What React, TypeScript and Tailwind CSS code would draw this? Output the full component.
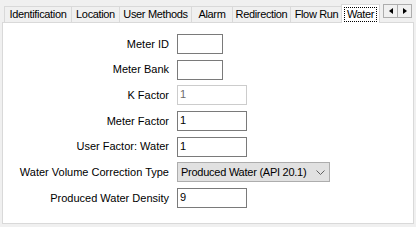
import React from "react";

const tabs = [
  { label: "Identification", w: "w-[68px]" },
  { label: "Location", w: "w-[49px]" },
  { label: "User Methods", w: "w-[73px]" },
  { label: "Alarm", w: "w-[42px]" },
  { label: "Redirection", w: "w-[59px]" },
  { label: "Flow Run", w: "w-[53px]" },
];

function TextBox({
  value,
  wide,
  disabled,
}: {
  value?: string;
  wide?: boolean;
  disabled?: boolean;
}) {
  return (
    <div
      className={`h-[20px] ${wide ? "w-[70px]" : "w-[46px]"} border ${
        disabled
          ? "border-[#cccccc] text-[#6d6d6d]"
          : "border-[#7a7a7a] text-black"
      } bg-white pl-[2px] leading-[17px]`}
    >
      {value}
    </div>
  );
}

export default function App() {
  return (
    <div
      className="w-[416px] h-[227px] bg-[#f0f0f0] text-[11px] text-black"
      style={{ fontFamily: '"Liberation Sans", Arial, sans-serif' }}
    >
      {/* tab strip */}
      <div className="flex items-end h-[22px] pl-[4px] relative tracking-[-0.35px]">
        {tabs.map((t) => (
          <div
            key={t.label}
            className={`${t.w} h-[16px] -mr-px border border-b-0 border-[#d9d9d9] flex items-center justify-center leading-none`}
          >
            {t.label}
          </div>
        ))}
        <div className="w-[39px] h-[19px] -ml-[1px] -mb-px z-10 bg-white border border-b-0 border-[#d9d9d9] p-[2px] pb-[1px]">
          <div className="h-full border border-dotted border-black flex items-center justify-center leading-none">
            Water
          </div>
        </div>
        <div className="absolute left-[383px] top-[4px] flex">
          <div className="w-[15px] h-[14px] border border-[#adadad] bg-[#f0f0f0] flex items-center justify-center">
            <div className="w-0 h-0 border-y-[3.5px] border-y-transparent border-r-[4px] border-r-black" />
          </div>
          <div className="w-[15px] h-[14px] -ml-px border border-[#adadad] bg-[#f0f0f0] flex items-center justify-center">
            <div className="w-0 h-0 border-y-[3.5px] border-y-transparent border-l-[4px] border-l-black" />
          </div>
        </div>
      </div>

      {/* panel */}
      <div className="mx-[2px] w-[412px] h-[202px] bg-white border border-[#d9d9d9] pt-[11px]">
        <div className="grid grid-cols-[166px_auto] gap-x-[8px] gap-y-[5.67px] items-center">
          <div className="text-right">Meter ID</div>
          <TextBox />
          <div className="text-right">Meter Bank</div>
          <TextBox />
          <div className="text-right">K Factor</div>
          <TextBox value="1" wide disabled />
          <div className="text-right">Meter Factor</div>
          <TextBox value="1" wide />
          <div className="text-right">User Factor: Water</div>
          <TextBox value="1" wide />
          <div className="text-right">Water Volume Correction Type</div>
          <div className="w-[153px] h-[20px] border border-[#adadad] bg-[#e1e1e1] flex items-center justify-between pl-[3px] pr-[4px]">
            <span className="tracking-[-0.25px]">Produced Water (API 20.1)</span>
            <svg width="9" height="5" viewBox="0 0 9 5" fill="none">
              <path d="M0.5 0.5 L4.5 4.5 L8.5 0.5" stroke="#606060" strokeWidth="1" />
            </svg>
          </div>
          <div className="text-right">Produced Water Density</div>
          <TextBox value="9" wide />
        </div>
      </div>
    </div>
  );
}
